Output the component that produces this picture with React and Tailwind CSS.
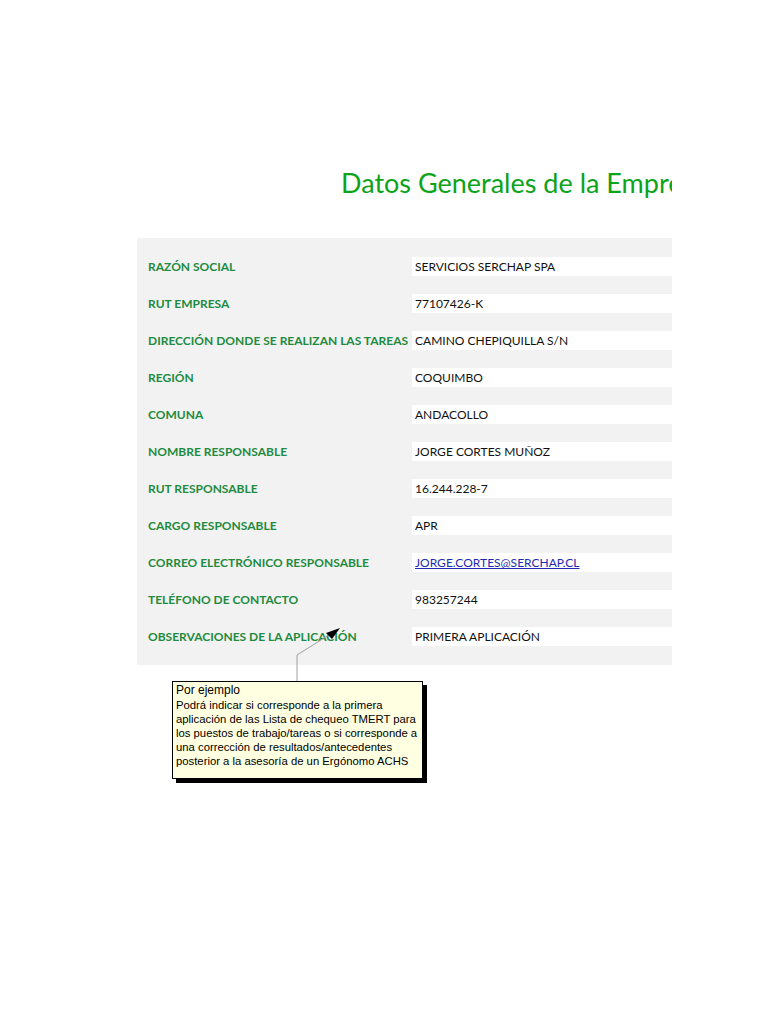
import React from "react";

const rows = [
  ["RAZÓN SOCIAL", "SERVICIOS SERCHAP SPA"],
  ["RUT EMPRESA", "77107426-K"],
  ["DIRECCIÓN DONDE SE REALIZAN LAS TAREAS", "CAMINO CHEPIQUILLA S/N"],
  ["REGIÓN", "COQUIMBO"],
  ["COMUNA", "ANDACOLLO"],
  ["NOMBRE RESPONSABLE", "JORGE CORTES MUÑOZ"],
  ["RUT RESPONSABLE", "16.244.228-7"],
  ["CARGO RESPONSABLE", "APR"],
  ["CORREO ELECTRÓNICO RESPONSABLE", "JORGE.CORTES@SERCHAP.CL", true],
  ["TELÉFONO DE CONTACTO", "983257244"],
  ["OBSERVACIONES DE LA APLICACIÓN", "PRIMERA APLICACIÓN"],
];

const noteLines = [
  "Podrá indicar si corresponde a la primera",
  "aplicación de las Lista de chequeo TMERT para",
  "los puestos de trabajo/tareas o si corresponde a",
  "una corrección de resultados/antecedentes",
  "posterior a la asesoría de un Ergónomo ACHS",
];

const App = () => {
  return (
    <div className="w-[768px] h-[1024px] bg-white font-['Lato',sans-serif]">
      <div className="relative w-[672px] h-full overflow-hidden">
        <h1 className="pt-[164px] pl-[341px] h-[238px] whitespace-nowrap text-[27px] leading-[38px] text-[#0ca319]">
          Datos Generales de la Empresa
        </h1>
        <section className="ml-[137px] bg-[#f2f2f2] pt-[19px] pb-[19px] flex flex-col gap-[18px]">
          {rows.map(([label, value, link]) => (
            <div key={label} className="flex h-[19px] items-center">
              <div className="w-[275px] pl-[11px] text-[12px] font-bold text-[#1e8b3e] whitespace-nowrap">
                {label}
              </div>
              <div className="flex-1 h-full bg-white flex items-center pl-[3px] pt-[1px] text-[12px] text-[#111] whitespace-nowrap">
                {link ? (
                  <span className="text-[#1f2bb0] underline">{value}</span>
                ) : (
                  value
                )}
              </div>
            </div>
          ))}
        </section>

        <svg className="absolute left-0 top-0" width="672" height="700">
          <polyline points="297,681 297,655 329,635" fill="none" stroke="#a0a0a0" strokeWidth="1" />
          <polygon points="340,628 326,633 332,639" fill="#000" />
        </svg>

        <div className="absolute left-[172px] top-[681px] w-[251px] h-[98px] bg-[#ffffe1] border border-black shadow-[4px_4px_0_#000] px-[3px] pt-[1px] font-['Liberation_Sans',sans-serif] text-black whitespace-nowrap">
          <div className="text-[12px] leading-[15px]">Por ejemplo</div>
          {noteLines.map((line) => (
            <div key={line} className="text-[11.3px] leading-[14px]">
              {line}
            </div>
          ))}
        </div>
      </div>
    </div>
  );
};

export default App;
